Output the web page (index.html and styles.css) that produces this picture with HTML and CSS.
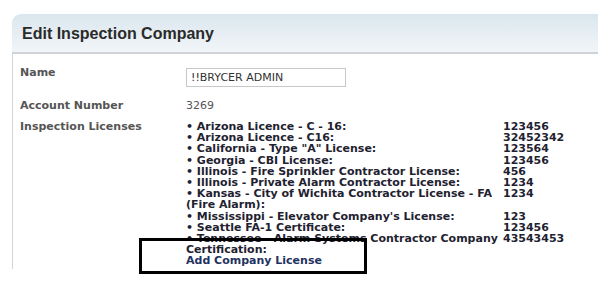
FILE: index.html
```html
<!DOCTYPE html>
<html>
<head>
<meta charset="utf-8">
<link rel="stylesheet" href="styles.css">
</head>
<body>
<div class="panel">
  <div class="panel-head"><h1 class="title">Edit Inspection Company</h1></div>
  <div class="panel-body">
    <div class="row row-name">
      <div class="label">Name</div>
      <div class="value"><div class="input">!!BRYCER ADMIN</div></div>
    </div>
    <div class="row row-acct">
      <div class="label">Account Number</div>
      <div class="value plain">3269</div>
    </div>
    <div class="row row-lic">
      <div class="label">Inspection Licenses</div>
      <div class="value">
        <table class="licenses">
          <tr><td class="lname">• Arizona Licence - C - 16:</td><td class="lnum">123456</td></tr>
          <tr><td class="lname">• Arizona Licence - C16:</td><td class="lnum">32452342</td></tr>
          <tr><td class="lname">• California - Type "A" License:</td><td class="lnum">123564</td></tr>
          <tr><td class="lname">• Georgia - CBI License:</td><td class="lnum">123456</td></tr>
          <tr><td class="lname">• Illinois - Fire Sprinkler Contractor License:</td><td class="lnum">456</td></tr>
          <tr><td class="lname">• Illinois - Private Alarm Contractor License:</td><td class="lnum">1234</td></tr>
          <tr><td class="lname">• Kansas - City of Wichita Contractor License - FA (Fire Alarm):</td><td class="lnum">1234</td></tr>
          <tr><td class="lname">• Mississippi - Elevator Company's License:</td><td class="lnum">123</td></tr>
          <tr><td class="lname">• Seattle FA-1 Certificate:</td><td class="lnum">123456</td></tr>
          <tr><td class="lname">• Tennessee - Alarm Systems Contractor Company Certification:</td><td class="lnum">43543453</td></tr>
        </table>
        <a class="add-link" href="#">Add Company License</a>
      </div>
    </div>
  </div>
</div>
<div class="highlight"></div>
</body>
</html>
```
FILE: styles.css
```css
html, body {
  margin: 0;
  padding: 0;
  background: #ffffff;
}
body {
  position: relative;
  width: 605px;
  height: 290px;
  overflow: hidden;
  font-family: Verdana, "DejaVu Sans", sans-serif;
  font-size: 11px;
}
.panel {
  margin: 14px 0 0 12px;
  width: 586px;
}
.panel-head {
  height: 38px;
  border-bottom: 2px solid #cdd3d8;
  border-top-left-radius: 9px;
  background: linear-gradient(to bottom, #d9e6ee 0%, #e6eef3 50%, #f1f5f8 100%);
  display: flex;
  align-items: center;
  padding-left: 10px;
}
.title {
  margin: 0;
  font-family: "Liberation Sans", Arial, sans-serif;
  font-size: 16px;
  font-weight: bold;
  color: #2a2a2a;
  padding-top: 1px;
}
.panel-body {
  border-left: 1px solid #d4d4d4;
  height: 204px;
  padding: 11px 0 0 7px;
}
.row {
  display: grid;
  grid-template-columns: 166px 1fr;
}
.label {
  font-weight: bold;
  color: #555555;
  line-height: 13px;
}
.row-name { height: 34px; }
.row-name .label { padding-top: 1px; }
.row-acct { height: 21px; }
.row-lic .label { line-height: 11px; padding-top: 1px; }
.input {
  width: 154px;
  height: 17px;
  border: 1px solid #c8c8c8;
  margin-top: 3px;
  box-sizing: content-box;
  color: #333333;
  line-height: 17px;
  padding-left: 4px;
}
.plain {
  color: #555555;
  line-height: 13px;
}
.licenses {
  border-collapse: collapse;
  color: #1f2230;
  font-weight: bold;
  line-height: 11.2px;
  margin-top: 1px;
}
.licenses td {
  padding: 0;
  vertical-align: top;
}
.lname {
  width: 317px;
}
.add-link {
  display: block;
  color: #1f3360;
  font-weight: bold;
  text-decoration: none;
  line-height: 11.2px;
}
.highlight {
  position: absolute;
  left: 139px;
  top: 238px;
  width: 222px;
  height: 30px;
  border: 3px solid #000000;
}
```
